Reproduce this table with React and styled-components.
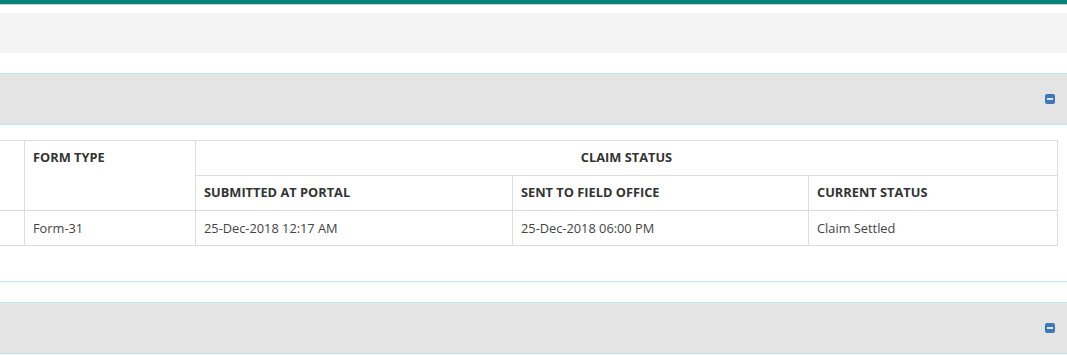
import React from "react";
import styled, { createGlobalStyle } from "styled-components";

const GlobalStyle = createGlobalStyle`
  html, body {
    margin: 0;
    padding: 0;
    background: #fff;
    overflow: hidden;
  }
  body {
    font-family: "Open Sans", "Noto Sans", "Liberation Sans", sans-serif;
    font-size: 12.8px;
    color: #333;
  }
`;

const claims = [
  {
    id: 1,
    formType: "Form-31",
    submitted: "25-Dec-2018 12:17 AM",
    sentToField: "25-Dec-2018 06:00 PM",
    current: "Claim Settled",
  },
];

function App() {
  return (
    <>
      <GlobalStyle />
      <TopBar />
      <Page>
        <Breadcrumb />
        <Panel>
          <PanelHeading>
            <Toggle />
          </PanelHeading>
          <PanelBody>
            <Table>
              <colgroup>
                <col style={{ width: 34 }} />
                <col style={{ width: 171 }} />
                <col style={{ width: 317 }} />
                <col style={{ width: 296 }} />
                <col />
              </colgroup>
              <thead>
                <tr>
                  <Th rowSpan={2}></Th>
                  <Th rowSpan={2}>FORM TYPE</Th>
                  <Th colSpan={3} $center>
                    CLAIM STATUS
                  </Th>
                </tr>
                <tr>
                  <Th>SUBMITTED AT PORTAL</Th>
                  <Th>SENT TO FIELD OFFICE</Th>
                  <Th>CURRENT STATUS</Th>
                </tr>
              </thead>
              <tbody>
                {claims.map((c) => (
                  <tr key={c.id}>
                    <Td></Td>
                    <Td>{c.formType}</Td>
                    <Td>{c.submitted}</Td>
                    <Td>{c.sentToField}</Td>
                    <Td>{c.current}</Td>
                  </tr>
                ))}
              </tbody>
            </Table>
          </PanelBody>
        </Panel>
        <Panel>
          <PanelHeading>
            <Toggle />
          </PanelHeading>
        </Panel>
      </Page>
    </>
  );
}

function Toggle() {
  return (
    <ToggleIcon viewBox="0 0 10 10" width="10" height="10">
      <rect x="0" y="0" width="10" height="10" rx="2" fill="#3a78bd" />
      <rect x="2" y="4" width="6" height="2" fill="#e6e6e6" />
    </ToggleIcon>
  );
}

export default App;

const TopBar = styled.div`
  height: 4px;
  background: #08827e;
  border-bottom: 1px solid #cbd5d3;
`;

const Page = styled.div`
  margin: 8px -7px 0 -26px;
`;

const Breadcrumb = styled.div`
  height: 40px;
  background: #f4f4f4;
  margin-bottom: 20px;
`;

const Panel = styled.div`
  border: 1px solid #bce8f1;
  background: #fff;
  margin-bottom: 20px;
  box-shadow: 0 1px 2px rgba(0, 0, 0, 0.05);
`;

const PanelHeading = styled.div`
  height: 50px;
  background: #e4e4e4;
  display: flex;
  align-items: center;
  justify-content: flex-end;
  padding-right: 18px;
  & + div {
    border-top: 1px solid #bce8f1;
  }
`;

const ToggleIcon = styled.svg`
  display: block;
`;

const PanelBody = styled.div`
  padding: 15px 15px 35px;
`;

const Table = styled.table`
  width: 100%;
  border-collapse: collapse;
  table-layout: fixed;
  border: 1px solid #ddd;
`;

const Th = styled.th`
  border: 1px solid #ddd;
  padding: 7px 8px 9px;
  height: 18px;
  line-height: 18px;
  font-weight: 700;
  color: #333;
  vertical-align: top;
  text-align: ${(p) => (p.$center ? "center" : "left")};
  white-space: nowrap;
`;

const Td = styled.td`
  border: 1px solid #ddd;
  padding: 8px 8px;
  line-height: 18px;
  color: #444;
  vertical-align: top;
  white-space: nowrap;
`;
